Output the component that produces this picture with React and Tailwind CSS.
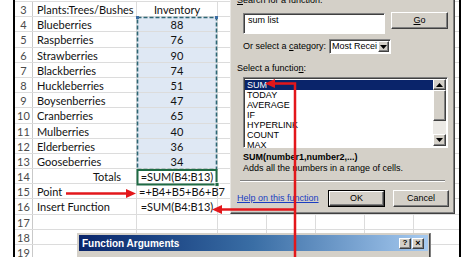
import React from 'react'

const ROWS = [
  { n: 3, a: 'Plants:Trees/Bushes', b: 'Inventory' },
  { n: 4, a: 'Blueberries', b: '88', sel: true },
  { n: 5, a: 'Raspberries', b: '76', sel: true },
  { n: 6, a: 'Strawberries', b: '90', sel: true },
  { n: 7, a: 'Blackberries', b: '74', sel: true },
  { n: 8, a: 'Huckleberries', b: '51', sel: true },
  { n: 9, a: 'Boysenberries', b: '47', sel: true },
  { n: 10, a: 'Cranberries', b: '65', sel: true },
  { n: 11, a: 'Mulberries', b: '40', sel: true },
  { n: 12, a: 'Elderberries', b: '36', sel: true },
  { n: 13, a: 'Gooseberries', b: '34', sel: true },
  { n: 14, a: 'Totals', aRight: true, b: '=SUM(B4:B13)' },
  { n: 15, a: 'Point', b: '=+B4+B5+B6+B7', bLeft: true },
  { n: 16, a: 'Insert Function', b: '=SUM(B4:B13)' },
  { n: 17 },
  { n: 18 },
  { n: 19 },
]

const FUNCS = ['SUM', 'TODAY', 'AVERAGE', 'IF', 'HYPERLINK', 'COUNT', 'MAX']

const raised =
  'border border-t-white border-l-white border-r-[#404040] border-b-[#404040] shadow-[inset_-1px_-1px_0_#808080] bg-[#d4d0c8]'
const sunken =
  'border border-t-[#808080] border-l-[#808080] border-r-white border-b-white shadow-[inset_1px_1px_0_#404040]'

function Row({ n, a, b, aRight, bLeft, sel }) {
  return (
    <div className="flex h-[15.2px] border-b border-[#dcdcdc] leading-[15px]">
      <div className="w-[18px] shrink-0 border-r border-[#c9c9c9] text-center text-[#4a4a4a]">{n}</div>
      <div className={`w-[104px] shrink-0 border-r border-[#dcdcdc] whitespace-nowrap ${aRight ? 'text-right pr-[15px]' : 'pl-[4px]'}`}>
        {a}
      </div>
      <div className={`w-[81px] shrink-0 border-r border-[#dcdcdc] whitespace-nowrap ${sel ? 'bg-[#dfe8f4]' : ''} ${bLeft ? 'pl-[2px]' : 'text-center'}`}>
        {b}
      </div>
      <div className="w-[49px] shrink-0 border-r border-[#dcdcdc]" />
      <div className="w-[49px] shrink-0 border-r border-[#dcdcdc]" />
      <div className="w-[49px] shrink-0 border-r border-[#dcdcdc]" />
      <div className="w-[49px] shrink-0 border-r border-[#dcdcdc]" />
      <div className="w-[45px] shrink-0" />
    </div>
  )
}

function Tri({ down }) {
  return (
    <svg width="7" height="4" viewBox="0 0 7 4">
      <polygon points={down ? '0,0 7,0 3.5,4' : '0,4 7,4 3.5,0'} fill="#000" />
    </svg>
  )
}

function InsertFunction() {
  return (
    <div className="absolute left-[230px] top-[-8px] w-[225px] h-[222px] bg-[#d4d0c8] border border-t-[#d4d0c8] border-l-[#e8e6e2] border-r-[#404040] border-b-[#404040] shadow-[inset_-1px_-1px_0_#808080] font-['Liberation_Sans',sans-serif] text-[9px] text-black">
      <div className="pl-[6px] pt-[2px] leading-[10px]">
        <u>S</u>earch for a function:
      </div>
      <div className="flex items-start ml-[12px] mt-[8px] gap-[6px]">
        <div className={`w-[142px] h-[21px] bg-white ${sunken} px-[4px] pt-[1px] leading-[10px]`}>sum list</div>
        <div className={`w-[57px] h-[17px] -mt-[1px] ${raised} flex items-center justify-center`}>
          <span><u>G</u>o</span>
        </div>
      </div>
      <div className="flex items-center ml-[12px] mt-[5px] gap-[3px]">
        <span>Or select a <u>c</u>ategory:</span>
        <div className={`w-[62px] h-[15px] bg-white ${sunken} flex items-center pl-[2px]`}>
          <span className="flex-1 overflow-hidden whitespace-nowrap">Most Recei</span>
          <div className={`w-[11px] h-[11px] mr-[1px] ${raised} flex items-center justify-center`}>
            <Tri down />
          </div>
        </div>
      </div>
      <div className="pl-[6px] mt-[9px] leading-[10px]">
        Select a functio<u>n</u>:
      </div>
      <div className={`ml-[12px] mt-[4px] w-[205px] h-[71px] bg-white ${sunken} flex p-[1px]`}>
        <div className="flex-1 pt-[1px] uppercase leading-[10px]">
          {FUNCS.map((f, i) => (
            <div key={f} className={`h-[10px] pl-[2px] ${i === 0 ? 'bg-[#0a246a] text-white' : ''}`}>{f}</div>
          ))}
        </div>
        <div className="w-[13px] flex flex-col bg-[#ebe9e5]">
          <div className={`h-[11px] ${raised} flex items-center justify-center`}><Tri /></div>
          <div className={`h-[31px] ${raised}`} />
          <div className="flex-1" />
          <div className={`h-[12px] ${raised} flex items-center justify-center`}><Tri down /></div>
        </div>
      </div>
      <div className="pl-[12px] mt-[4px] font-bold leading-[10px]">SUM(number1,number2,...)</div>
      <div className="pl-[12px] mt-[1px] leading-[10px]">Adds all the numbers in a range of cells.</div>
      <div className="mx-[9px] mt-[7px] border-t border-t-[#808080] border-b border-b-white" />
      <div className="flex items-center mt-[8px] pl-[6px]">
        <span className="text-[#1a3dc1] underline w-[91px]">Help on this function</span>
        <div className="w-[57px] h-[17px] border border-black flex">
          <div className={`flex-1 ${raised} flex items-center justify-center`}>OK</div>
        </div>
        <div className={`ml-[8px] w-[56px] h-[17px] ${raised} flex items-center justify-center`}>Cancel</div>
      </div>
    </div>
  )
}

function FunctionArguments() {
  return (
    <div className="absolute left-[77px] top-[233px] w-[353px] h-[40px] bg-[#d4d0c8] border border-t-[#d4d0c8] border-l-[#d4d0c8] border-r-[#404040] shadow-[1px_0_0_#808080] font-['Liberation_Sans',sans-serif]">
      <div className="h-[16px] mx-[1px] mt-[1px] flex items-center bg-gradient-to-r from-[#0a246a] via-[#3a6ea5] to-[#a6caf0]">
        <span className="pl-[3px] text-[10px] font-bold text-white">Function Arguments</span>
        <div className="ml-auto flex gap-[1px] pr-[4px]">
          <div className={`w-[12px] h-[11px] ${raised} flex items-center justify-center text-[8px] font-bold leading-none`}>?</div>
          <div className={`w-[12px] h-[11px] ${raised} flex items-center justify-center text-[9px] font-bold leading-none`}>×</div>
        </div>
      </div>
      <div className="pl-[10px] pt-[3px] text-[9px] text-[#a8a49c]">Sum</div>
    </div>
  )
}

function Overlay() {
  const red = '#e3171b'
  return (
    <svg className="absolute inset-0 pointer-events-none" width="474" height="257" viewBox="0 0 474 257">
      {/* marquee around B4:B13 */}
      <rect x="137.5" y="17.5" width="79" height="152" fill="none" stroke="#2d6674" strokeWidth="1.6" strokeDasharray="4 2" />
      <rect x="136" y="16" width="3" height="3" fill="#3b6ea5" />
      <rect x="215" y="16" width="3" height="3" fill="#3b6ea5" />
      {/* active cell B14 */}
      <rect x="137.5" y="170" width="79" height="14.5" fill="none" stroke="#1f6b45" strokeWidth="2" />
      <rect x="215" y="182.5" width="4" height="4" fill="#1f6b45" stroke="#fff" strokeWidth="0.8" />
      {/* Point arrow */}
      <line x1="66" y1="193.5" x2="128" y2="193.5" stroke={red} strokeWidth="2.5" />
      <polygon points="136,193.5 126,189 126,198" fill={red} />
      {/* SUM arrow */}
      <polyline points="272,83.5 295,83.5 295,257" fill="none" stroke={red} strokeWidth="2.5" />
      <polygon points="265,83.5 275,79 275,88" fill={red} />
      {/* Insert Function arrow */}
      <line x1="220" y1="209.5" x2="296" y2="209.5" stroke={red} strokeWidth="2.5" />
      <polygon points="212,209.5 222,205 222,214" fill={red} />
    </svg>
  )
}

export default function App() {
  return (
    <div className="relative w-[474px] h-[257px] overflow-hidden bg-white">
      <div className="flex h-full">
        <div className="w-[13px] shrink-0 bg-white" />
        <div className="w-[2px] shrink-0 bg-black" />
        <div className="w-[444px] shrink-0 font-['Lato',sans-serif] text-[11px] text-[#111]">
          <div className="h-[2px] border-b border-[#dcdcdc]" />
          {ROWS.map(r => (
            <Row key={r.n} {...r} />
          ))}
        </div>
        <div className="w-[2px] shrink-0 bg-black" />
        <div className="flex-1 bg-white" />
      </div>
      <InsertFunction />
      <FunctionArguments />
      <Overlay />
    </div>
  )
}
